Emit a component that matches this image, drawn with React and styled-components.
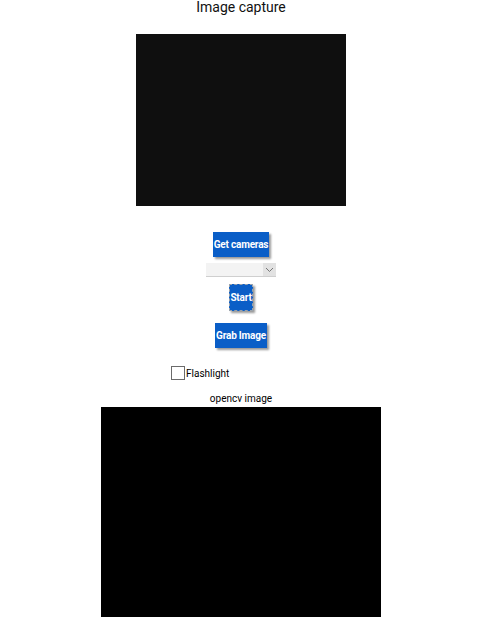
import React from "react";
import styled, { createGlobalStyle } from "styled-components";

const GlobalStyle = createGlobalStyle`
  html, body {
    margin: 0;
    padding: 0;
    background: #fff;
    font-family: Roboto, "Liberation Sans", Arial, sans-serif;
  }
`;

const Page = styled.div`
  display: flex;
  flex-direction: column;
  align-items: center;
  width: 482px;
  overflow: hidden;
`;

const Title = styled.h1`
  margin: 0;
  font-size: 14px;
  font-weight: 400;
  line-height: 15px;
  color: #111;
`;

const Video = styled.div`
  width: 210px;
  height: 172px;
  margin-top: 19px;
  background: #0f0f0f;
`;

const Button = styled.button`
  margin-top: ${(p) => p.$gap}px;
  height: ${(p) => p.$h || 25}px;
  padding: 0 ${(p) => p.$px ?? 1}px;
  background: #0a5ec7;
  color: #fff;
  font-family: Roboto, "Liberation Sans", Arial, sans-serif;
  font-size: 10px;
  font-weight: 700;
  letter-spacing: -0.2px;
  border: ${(p) => (p.$focused ? "1px dashed #9aa3ad" : "none")};
  box-shadow: 2px 2px 2px #9a9a9a;
  cursor: pointer;
`;

const Select = styled.div`
  margin-top: 6px;
  width: 70px;
  height: 13px;
  display: flex;
  justify-content: flex-end;
  background: #f3f3f3;
  border-bottom: 1px solid #cfcfcf;
`;

const Arrow = styled.div`
  width: 13px;
  height: 13px;
  display: flex;
  align-items: center;
  justify-content: center;
  background: #e2e2e2;
`;

const CheckRow = styled.label`
  margin-top: 18px;
  width: 140px;
  display: flex;
  align-items: center;
  font-size: 10px;
  color: #000;
`;

const Box = styled.span`
  width: 12px;
  height: 12px;
  border: 1px solid #6b6b6b;
  background: #fff;
  margin-right: 1px;
`;

const Caption = styled.div`
  margin-top: 13px;
  font-size: 10px;
  line-height: 12px;
  color: #000;
`;

const Canvas = styled.div`
  margin-top: 2px;
  width: 280px;
  height: 210px;
  background: #000;
`;

export default function App() {
  return (
    <>
      <GlobalStyle />
      <Page>
        <Title>Image capture</Title>
        <Video />
        <Button $gap={26}>Get cameras</Button>
        <Select>
          <Arrow>
            <svg width="9" height="6" viewBox="0 0 9 6">
              <path d="M1 1l3.5 3.5L8 1" fill="none" stroke="#777" strokeWidth="1" />
            </svg>
          </Arrow>
        </Select>
        <Button $gap={7} $h={27} $px={0} $focused>Start</Button>
        <Button $gap={12}>Grab Image</Button>
        <CheckRow>
          <Box />
          Flashlight
        </CheckRow>
        <Caption>opencv image</Caption>
        <Canvas />
      </Page>
    </>
  );
}
